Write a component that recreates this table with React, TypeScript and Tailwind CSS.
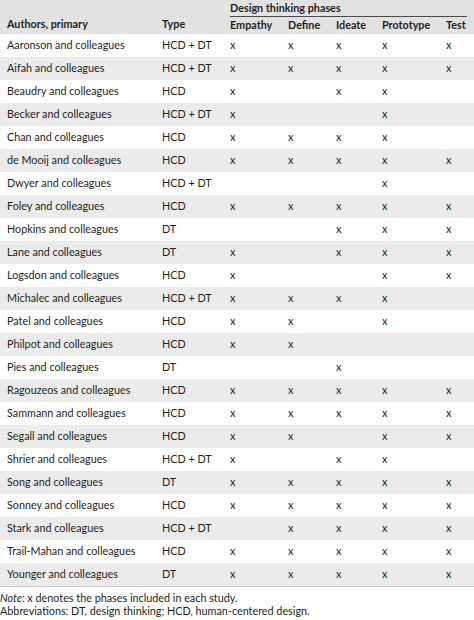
import React from "react";

type Row = [string, string, string];

const rows: Row[] = [
  ["Aaronson and colleagues", "HCD + DT", "11111"],
  ["Aifah and colleagues", "HCD + DT", "11111"],
  ["Beaudry and colleagues", "HCD", "10110"],
  ["Becker and colleagues", "HCD + DT", "10010"],
  ["Chan and colleagues", "HCD", "11110"],
  ["de Mooij and colleagues", "HCD", "11111"],
  ["Dwyer and colleagues", "HCD + DT", "00010"],
  ["Foley and colleagues", "HCD", "11111"],
  ["Hopkins and colleagues", "DT", "00111"],
  ["Lane and colleagues", "DT", "10111"],
  ["Logsdon and colleagues", "HCD", "10011"],
  ["Michalec and colleagues", "HCD + DT", "11110"],
  ["Patel and colleagues", "HCD", "11010"],
  ["Philpot and colleagues", "HCD", "11000"],
  ["Pies and colleagues", "DT", "00100"],
  ["Ragouzeos and colleagues", "HCD", "11111"],
  ["Sammann and colleagues", "HCD", "11111"],
  ["Segall and colleagues", "HCD", "11011"],
  ["Shrier and colleagues", "HCD + DT", "10110"],
  ["Song and colleagues", "DT", "11111"],
  ["Sonney and colleagues", "HCD", "11111"],
  ["Stark and colleagues", "HCD + DT", "01111"],
  ["Trail-Mahan and colleagues", "HCD", "11111"],
  ["Younger and colleagues", "DT", "11111"],
];

const grid = "grid grid-cols-[155px_69px_58px_48px_46px_64px_34px]";

export default function App() {
  return (
    <div
      className="w-[474px] h-[620px] bg-white text-[#231f20] text-[10.8px] overflow-hidden"
      style={{ fontFamily: "Lato, 'Open Sans', sans-serif" }}
    >
      <div className="bg-[#e2e2e2] h-[34px] font-bold">
        <div className={grid + " h-full"}>
          <div className="pl-[7px] flex items-end pb-[3px] leading-[14px]">Authors, primary</div>
          <div className="pl-[7px] flex items-end pb-[3px] leading-[14px]">Type</div>
          <div className="col-span-5 flex flex-col pl-[7px] pr-[7px]">
            <div className="h-[17px] flex items-end leading-[14px] border-b border-[#4a4a4a] pb-[1px] -ml-px">
              Design thinking phases
            </div>
            <div className="grid grid-cols-[58px_48px_46px_64px_27px] -ml-px">
              <div className="leading-[14px] pt-[1px]">Empathy</div>
              <div className="leading-[14px] pt-[1px]">Define</div>
              <div className="leading-[14px] pt-[1px]">Ideate</div>
              <div className="leading-[14px] pt-[1px]">Prototype</div>
              <div className="leading-[14px] pt-[1px]">Test</div>
            </div>
          </div>
        </div>
      </div>
      {rows.map((r, i) => (
        <div
          key={r[0]}
          className={
            grid +
            " h-[23px] items-center " +
            (i % 2 === 1 ? "bg-[#ebebeb]" : "bg-white")
          }
        >
          <div className="pl-[7px] whitespace-nowrap">{r[0]}</div>
          <div className="pl-[7px] whitespace-nowrap">{r[1]}</div>
          {r[2].split("").map((c, j) => (
            <div key={j} className="pl-[6px]">
              {c === "1" ? "x" : ""}
            </div>
          ))}
        </div>
      ))}
      <div className="h-px bg-[#d0d0d0]" />
      <div className="pt-[5px] leading-[12px] whitespace-nowrap">
        <span className="italic">Note</span>: x denotes the phases included in each study.
      </div>
      <div className="pt-[1px] leading-[12px] whitespace-nowrap">
        Abbreviations: DT, design thinking; HCD, human-centered design.
      </div>
    </div>
  );
}
